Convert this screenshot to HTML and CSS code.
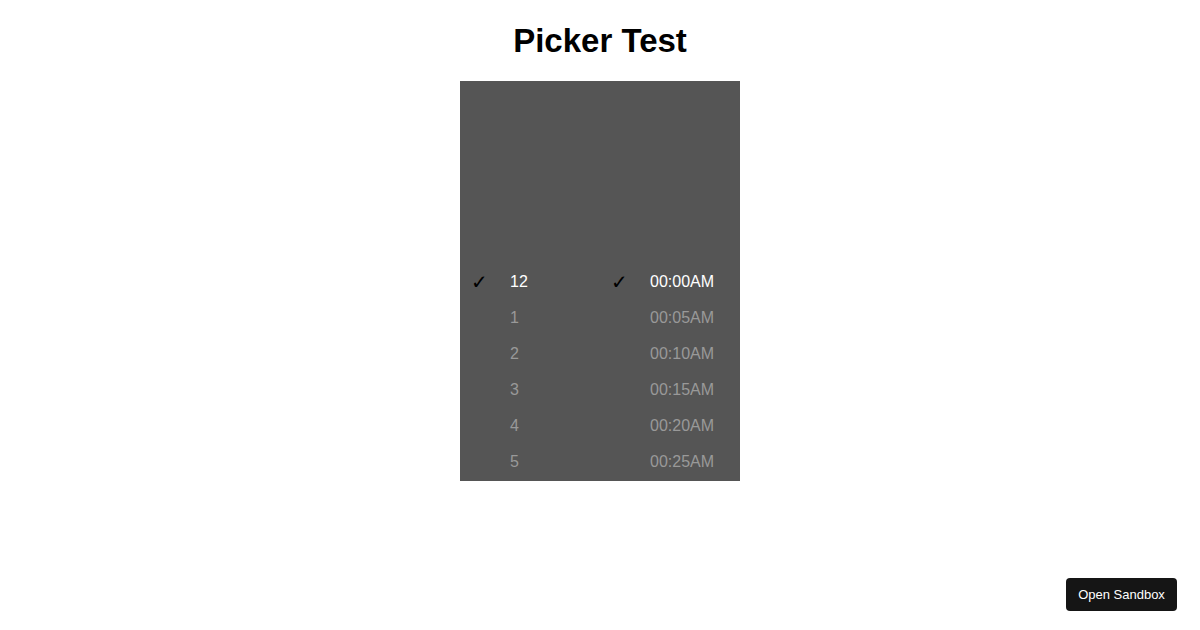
FILE: index.html
```html
<!DOCTYPE html>
<html>
<head>
<meta charset="utf-8">
<link rel="stylesheet" href="styles.css">
</head>
<body>
<h1 class="title">Picker Test</h1>
<div class="picker">
  <div class="col">
    <div class="item selected"><span class="check">✓</span><span class="label">12</span></div>
    <div class="item"><span class="check"></span><span class="label">1</span></div>
    <div class="item"><span class="check"></span><span class="label">2</span></div>
    <div class="item"><span class="check"></span><span class="label">3</span></div>
    <div class="item"><span class="check"></span><span class="label">4</span></div>
    <div class="item"><span class="check"></span><span class="label">5</span></div>
  </div>
  <div class="col">
    <div class="item selected"><span class="check">✓</span><span class="label">00:00AM</span></div>
    <div class="item"><span class="check"></span><span class="label">00:05AM</span></div>
    <div class="item"><span class="check"></span><span class="label">00:10AM</span></div>
    <div class="item"><span class="check"></span><span class="label">00:15AM</span></div>
    <div class="item"><span class="check"></span><span class="label">00:20AM</span></div>
    <div class="item"><span class="check"></span><span class="label">00:25AM</span></div>
  </div>
</div>
<button class="sandbox">Open Sandbox</button>
</body>
</html>
```
FILE: styles.css
```css
html, body {
  margin: 0;
  padding: 0;
  background: #ffffff;
  font-family: "Liberation Sans", Arial, sans-serif;
}
body {
  padding-top: 1px;
}
.title {
  margin: 21px 0 0;
  height: 39px;
  line-height: 37px;
  font-size: 33px;
  font-weight: bold;
  text-align: center;
  color: #000;
}
.picker {
  margin: 20px auto 0;
  width: 280px;
  height: 400px;
  background: #555555;
  display: flex;
  overflow: hidden;
}
.col {
  flex: 1;
  padding-top: 183px;
}
.item {
  height: 36px;
  display: flex;
  align-items: center;
  padding-left: 11px;
  font-size: 16px;
  color: #999999;
}
.item.selected {
  color: #ffffff;
}
.check {
  width: 39px;
  font-family: "DejaVu Sans", sans-serif;
  font-size: 20px;
  color: #000;
}
.sandbox {
  position: fixed;
  right: 23px;
  bottom: 19px;
  width: 111px;
  height: 33px;
  padding: 0;
  border: none;
  border-radius: 4px;
  background: #151515;
  color: #ffffff;
  font-family: "Liberation Sans", Arial, sans-serif;
  font-size: 13px;
}
```
